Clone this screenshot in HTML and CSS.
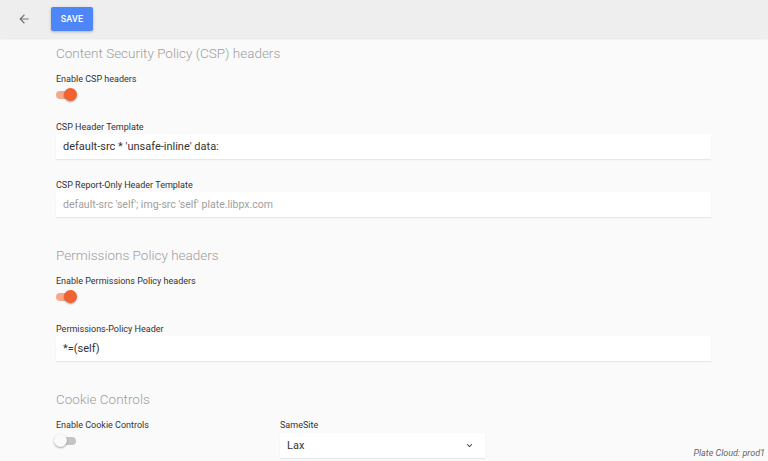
FILE: index.html
```html
<!DOCTYPE html>
<html>
<head>
    <title>Security Headers</title>
    <link rel="stylesheet" href="styles.css">
</head>
<body>

    <div class="toolbar">
        <button class="back" title="Back">
            <svg width="14" height="14" viewBox="0 0 24 24"><path d="M20 11H7.83l5.59-5.59L12 4l-8 8 8 8 1.41-1.41L7.83 13H20v-2z" fill="#757575"/></svg>
        </button>
        <button class="save">SAVE</button>
    </div>

    <div class="content">
        <h2>Content Security Policy (CSP) headers</h2>

        <div class="field">
            <div class="label">Enable CSP headers</div>
            <label class="toggle on"><span class="track"></span><span class="knob"></span></label>
        </div>

        <div class="field">
            <div class="label">CSP Header Template</div>
            <div class="input">default-src * 'unsafe-inline' data:</div>
        </div>

        <div class="field">
            <div class="label">CSP Report-Only Header Template</div>
            <div class="input placeholder">default-src 'self'; img-src 'self' plate.libpx.com</div>
        </div>

        <h2>Permissions Policy headers</h2>

        <div class="field">
            <div class="label">Enable Permissions Policy headers</div>
            <label class="toggle on"><span class="track"></span><span class="knob"></span></label>
        </div>

        <div class="field">
            <div class="label">Permissions-Policy Header</div>
            <div class="input">*=(self)</div>
        </div>

        <h2>Cookie Controls</h2>

        <div class="row">
            <div class="field col">
                <div class="label">Enable Cookie Controls</div>
                <label class="toggle"><span class="track"></span><span class="knob"></span></label>
            </div>
            <div class="field col">
                <div class="label">SameSite</div>
                <div class="input select">
                    <span>Lax</span>
                    <svg width="11" height="11" viewBox="0 0 24 24"><path d="M7.41 8.59 12 13.17l4.59-4.58L18 10l-6 6-6-6z" fill="#333"/></svg>
                </div>
            </div>
        </div>
    </div>

    <div class="footer">Plate Cloud: prod1</div>

</body>
</html>
```

FILE: styles.css
```css
body {
    margin: 0;
    font-family: Roboto, "Liberation Sans", sans-serif;
    background-color: #fafafa;
    color: #333;
    height: 461px;
    overflow: hidden;
    position: relative;
}

.toolbar {
    height: 38px;
    background-color: #eeeeee;
    display: flex;
    align-items: center;
    box-shadow: 0 1px 2px rgba(0,0,0,0.08);
}

.back {
    border: none;
    background: none;
    width: 20px;
    height: 20px;
    margin-left: 14px;
    padding: 0;
    display: flex;
    align-items: center;
    justify-content: center;
}

.save {
    margin-left: 17px;
    margin-top: -1px;
    height: 24px;
    width: 42px;
    border: none;
    border-radius: 2px;
    background-color: #4f86f7;
    color: white;
    font-family: Roboto, sans-serif;
    font-size: 9px;
    font-weight: 500;
    letter-spacing: 0.2px;
    box-shadow: 0 1px 3px rgba(0,0,0,0.25);
    padding: 0;
}

.content {
    padding: 6px 57px 0 56px;
}

h2 {
    margin: 29px 0 11px 0;
    font-size: 13.5px;
    font-weight: 300;
    color: #9e9e9e;
    line-height: 18px;
}

h2:first-child {
    margin-top: 0;
}

.field {
    margin-bottom: 20px;
}

.label {
    font-size: 9px;
    line-height: 12px;
    color: #333;
}

.toggle {
    display: block;
    position: relative;
    width: 24px;
    height: 13px;
    margin: 3px 0 0 -2px;
}

.toggle .track {
    position: absolute;
    left: 2px;
    top: 3px;
    width: 20px;
    height: 8px;
    border-radius: 4px;
    background-color: #c4c4c4;
}

.toggle .knob {
    position: absolute;
    left: 0;
    top: 0;
    width: 13px;
    height: 13px;
    border-radius: 50%;
    background-color: #fafafa;
    box-shadow: 0 1px 2px rgba(0,0,0,0.35);
}

.toggle.on .track {
    background-color: #f5a88d;
}

.toggle.on .knob {
    left: 10px;
    background-color: #f0622f;
}

.input {
    margin-top: 1px;
    height: 25px;
    background-color: white;
    box-shadow: 0 1px 1px rgba(0,0,0,0.07);
    font-size: 11px;
    line-height: 25px;
    padding: 0 7px;
    color: #333;
}

.input.placeholder {
    color: #9e9e9e;
    font-size: 10.5px;
}

.row {
    display: flex;
}

.col {
    width: 224px;
}

.col + .col {
    width: 205px;
}

.select {
    display: flex;
    align-items: center;
    justify-content: space-between;
    margin-top: 2px;
    padding-right: 10px;
}

.footer {
    position: absolute;
    right: 3px;
    bottom: 3px;
    font-size: 9px;
    font-style: italic;
    color: #666;
}
```
